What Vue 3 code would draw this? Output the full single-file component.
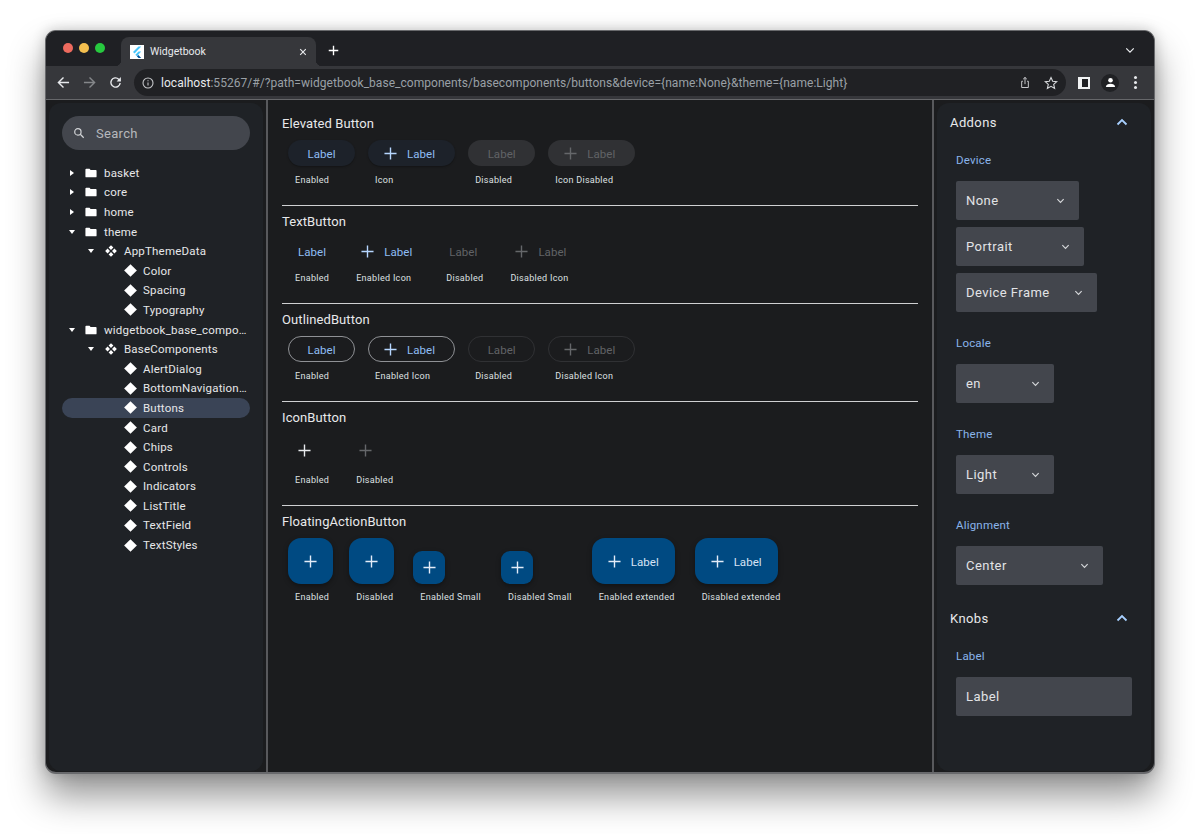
<template>
  <div class="page">
    <div class="window">
      <div class="titlebar">
        <div class="lights">
          <span class="light red"></span>
          <span class="light yellow"></span>
          <span class="light green"></span>
        </div>
        <div class="tab">
          <svg class="favicon" viewBox="0 0 14 14">
            <rect width="14" height="14" fill="#fff" />
            <path d="M8.5 1.5 3 7l1.6 1.6 6.6-7.1z" fill="#47c5fb" />
            <path d="M8.5 6.6 5.4 9.7l1.5 1.6 4.3-4.7z" fill="#47c5fb" />
            <path d="M6.9 11.3 8.5 13h2.700L8.400 9.900z" fill="#00569e" />
          </svg>
          <span class="tab-title">Widgetbook</span>
          <svg class="tab-close" viewBox="0 0 10 10"><path d="M1.500 1.500l7 7M8.500 1.500l-7 7" /></svg>
        </div>
        <svg class="new-tab" viewBox="0 0 12 12"><path d="M6 .8v10.400M.8 6h10.400" /></svg>
        <svg class="tabs-menu" viewBox="0 0 12 8"><path d="M1.500 1.500 6 6l4.500-4.500" /></svg>
      </div>

      <div class="toolbar">
        <svg class="nav-icon" viewBox="0 0 14 14"><path d="M13 7H2M7 1.500 1.500 7 7 12.500" /></svg>
        <svg class="nav-icon dim" viewBox="0 0 14 14"><path d="M1 7h11M7 1.500 12.500 7 7 12.500" /></svg>
        <svg class="nav-icon" viewBox="0 0 14 14"><path d="M12 7.500A5 5 0 1 1 10.500 3.400L12 5" /><path class="solid" d="M12.800 1.200v4.600H8.200z" /></svg>
        <div class="urlbar">
          <svg class="info" viewBox="0 0 12 12">
            <circle cx="6" cy="6" r="5" />
            <path d="M6 5.400v3.200M6 3.200v1.100" />
          </svg>
          <span class="url"><span class="host">localhost</span>:55267/#/?path=widgetbook_base_components/basecomponents/buttons&amp;device={name:None}&amp;theme={name:Light}</span>
          <svg class="url-icon" viewBox="0 0 12 14"><path d="M3.500 5.500H2v7.500h8V5.500H8.500M6 9V1M3.800 3 6 .9 8.200 3" /></svg>
          <svg class="url-icon star" viewBox="0 0 14 14"><path d="m7 1.500 1.700 3.800 4 .4-3 2.700.9 4L7 10.300l-3.600 2.100.9-4-3-2.700 4-.4z" /></svg>
        </div>
        <div class="side-icon"><span></span></div>
        <div class="avatar">
          <svg viewBox="0 0 12 12"><circle cx="6" cy="3.500" r="2.500" /><path d="M1 11c0-2.600 2.500-3.700 5-3.700s5 1.100 5 3.700z" /></svg>
        </div>
        <div class="kebab"><i></i><i></i><i></i></div>
      </div>

      <div class="content">
        <aside class="sidebar">
          <div class="panel tree-panel">
            <div class="search">
              <svg viewBox="0 0 14 14"><circle cx="5.700" cy="5.700" r="3.700" /><path d="m8.500 8.500 4 4" /></svg>
              <span>Search</span>
            </div>
            <div class="tree">
              <div
                v-for="row in tree"
                :key="row.label"
                :class="['tree-row', 'depth-' + row.depth, { selected: row.selected }]"
              >
                <span v-if="row.arrow" :class="['arrow', row.arrow]"></span>
                <svg v-if="row.type === 'folder'" class="tree-icon" viewBox="0 0 14 12">
                  <path d="M1.500 1h3.800l1.200 1.400h6a1 1 0 0 1 1 1v6.600a1 1 0 0 1-1 1h-11a1 1 0 0 1-1-1V2a1 1 0 0 1 1-1z" />
                </svg>
                <svg v-else-if="row.type === 'component'" class="tree-icon" viewBox="0 0 14 14">
                  <path d="m7 .2 2.800 2.800L7 5.800 4.200 3zM3 4.200 5.800 7 3 9.800.2 7zM11 4.200 13.800 7 11 9.800 8.200 7zM7 8.200 9.800 11 7 13.800 4.200 11z" />
                </svg>
                <span v-else class="diamond"></span>
                <span class="tree-label">{{ row.label }}</span>
              </div>
            </div>
          </div>
        </aside>

        <main class="main">
          <section v-for="section in sections" :key="section.title" class="section">
            <h2>{{ section.title }}</h2>
            <div class="items">
              <div v-for="item in section.items" :key="item.caption" class="item">
                <div :class="['btn', item.kind, { disabled: item.disabled, 'has-icon': item.icon, 'has-label': item.label }]">
                  <svg v-if="item.icon" class="plus" viewBox="0 0 14 14"><path d="M7 .5v13M.5 7h13" /></svg>
                  <span v-if="item.label">Label</span>
                </div>
                <div class="caption">{{ item.caption }}</div>
              </div>
            </div>
          </section>
        </main>

        <aside class="addons">
          <div class="panel addons-panel">
            <div class="group-head">
              <span>Addons</span>
              <svg viewBox="0 0 12 8"><path d="M1.500 6.500 6 2l4.500 4.500" /></svg>
            </div>
            <div v-for="group in addons" :key="group.label" class="field">
              <div class="field-label">{{ group.label }}</div>
              <div class="drops">
                <div v-for="d in group.options" :key="d.text" class="drop" :style="{ width: d.width + 'px' }">
                  <span>{{ d.text }}</span>
                  <svg viewBox="0 0 10 6"><path d="M1.500 1 5 4.500 8.500 1" /></svg>
                </div>
              </div>
            </div>
            <div class="group-head knobs">
              <span>Knobs</span>
              <svg viewBox="0 0 12 8"><path d="M1.500 6.500 6 2l4.500 4.500" /></svg>
            </div>
            <div class="field">
              <div class="field-label">Label</div>
              <div class="text-input">Label</div>
            </div>
          </div>
        </aside>
      </div>
    </div>
  </div>
</template>

<script setup>
const tree = [
  { label: 'basket', depth: 0, arrow: 'right', type: 'folder' },
  { label: 'core', depth: 0, arrow: 'right', type: 'folder' },
  { label: 'home', depth: 0, arrow: 'right', type: 'folder' },
  { label: 'theme', depth: 0, arrow: 'down', type: 'folder' },
  { label: 'AppThemeData', depth: 1, arrow: 'down', type: 'component' },
  { label: 'Color', depth: 2, type: 'use' },
  { label: 'Spacing', depth: 2, type: 'use' },
  { label: 'Typography', depth: 2, type: 'use' },
  { label: 'widgetbook_base_compo…', depth: 0, arrow: 'down', type: 'folder' },
  { label: 'BaseComponents', depth: 1, arrow: 'down', type: 'component' },
  { label: 'AlertDialog', depth: 2, type: 'use' },
  { label: 'BottomNavigation…', depth: 2, type: 'use' },
  { label: 'Buttons', depth: 2, type: 'use', selected: true },
  { label: 'Card', depth: 2, type: 'use' },
  { label: 'Chips', depth: 2, type: 'use' },
  { label: 'Controls', depth: 2, type: 'use' },
  { label: 'Indicators', depth: 2, type: 'use' },
  { label: 'ListTitle', depth: 2, type: 'use' },
  { label: 'TextField', depth: 2, type: 'use' },
  { label: 'TextStyles', depth: 2, type: 'use' }
]

const sections = [
  {
    title: 'Elevated Button',
    items: [
      { kind: 'elevated', label: true, caption: 'Enabled' },
      { kind: 'elevated', label: true, icon: true, caption: 'Icon' },
      { kind: 'elevated', label: true, disabled: true, caption: 'Disabled' },
      { kind: 'elevated', label: true, icon: true, disabled: true, caption: 'Icon Disabled' }
    ]
  },
  {
    title: 'TextButton',
    items: [
      { kind: 'text', label: true, caption: 'Enabled' },
      { kind: 'text', label: true, icon: true, caption: 'Enabled Icon' },
      { kind: 'text', label: true, disabled: true, caption: 'Disabled' },
      { kind: 'text', label: true, icon: true, disabled: true, caption: 'Disabled Icon' }
    ]
  },
  {
    title: 'OutlinedButton',
    items: [
      { kind: 'outlined', label: true, caption: 'Enabled' },
      { kind: 'outlined', label: true, icon: true, caption: 'Enabled Icon' },
      { kind: 'outlined', label: true, disabled: true, caption: 'Disabled' },
      { kind: 'outlined', label: true, icon: true, disabled: true, caption: 'Disabled Icon' }
    ]
  },
  {
    title: 'IconButton',
    items: [
      { kind: 'icon', icon: true, caption: 'Enabled' },
      { kind: 'icon', icon: true, disabled: true, caption: 'Disabled' }
    ]
  },
  {
    title: 'FloatingActionButton',
    items: [
      { kind: 'fab', icon: true, caption: 'Enabled' },
      { kind: 'fab', icon: true, caption: 'Disabled' },
      { kind: 'fab small', icon: true, caption: 'Enabled Small' },
      { kind: 'fab small', icon: true, caption: 'Disabled Small' },
      { kind: 'fab extended', icon: true, label: true, caption: 'Enabled extended' },
      { kind: 'fab extended', icon: true, label: true, caption: 'Disabled extended' }
    ]
  }
]

const addons = [
  {
    label: 'Device',
    options: [
      { text: 'None', width: 123 },
      { text: 'Portrait', width: 128 },
      { text: 'Device Frame', width: 141 }
    ]
  },
  { label: 'Locale', options: [{ text: 'en', width: 98 }] },
  { label: 'Theme', options: [{ text: 'Light', width: 98 }] },
  { label: 'Alignment', options: [{ text: 'Center', width: 147 }] }
]
</script>

<style>
body {
  background: #fff;
}
</style>

<style scoped>
.page {
  height: 834px;
  padding: 30px 45px 0;
  box-sizing: border-box;
  overflow: hidden;
  font-family: Roboto, "Liberation Sans", sans-serif;
}

.window {
  height: 744px;
  box-sizing: border-box;
  display: flex;
  flex-direction: column;
  border: 1px solid #68696c;
  border-bottom-width: 2px;
  border-radius: 11px;
  background: #1b1c1e;
  box-shadow: 0 22px 36px rgba(0, 0, 0, 0.42), 0 0 14px rgba(0, 0, 0, 0.2);
  overflow: hidden;
}

.titlebar {
  height: 35px;
  flex: none;
  display: flex;
  align-items: flex-end;
  background: #1f2024;
}

.lights {
  display: flex;
  gap: 6px;
  margin: 0 0 13px 17px;
  width: 58px;
}

.light {
  width: 10px;
  height: 10px;
  border-radius: 50%;
}

.red { background: #ed6a5e; }
.yellow { background: #f4bf4f; }
.green { background: #27c93f; }

.tab {
  position: relative;
  width: 195px;
  height: 29px;
  box-sizing: border-box;
  padding: 0 9px;
  display: flex;
  align-items: center;
  background: #36373b;
  border-radius: 8px 8px 0 0;
}

.tab::before,
.tab::after {
  content: "";
  position: absolute;
  bottom: 0;
  width: 6px;
  height: 6px;
}

.tab::before {
  left: -6px;
  background: radial-gradient(circle at 0 0, transparent 6px, #36373b 6.5px);
}

.tab::after {
  right: -6px;
  background: radial-gradient(circle at 100% 0, transparent 6px, #36373b 6.5px);
}

.favicon {
  width: 14px;
  height: 14px;
  flex: none;
}

.tab-title {
  margin-left: 6px;
  flex: 1;
  color: #e8eaed;
  font-size: 10.500px;
}

.tab-close {
  width: 8px;
  height: 8px;
  fill: none;
  stroke: #e8eaed;
  stroke-width: 1.4;
}

.new-tab {
  width: 11px;
  height: 11px;
  margin: 0 0 10px 12px;
  fill: none;
  stroke: #fff;
  stroke-width: 1.5;
}

.tabs-menu {
  width: 10px;
  height: 7px;
  margin: 0 19px 12px auto;
  fill: none;
  stroke: #e8eaed;
  stroke-width: 1.5;
}

.toolbar {
  height: 33px;
  flex: none;
  display: flex;
  align-items: center;
  background: #36373b;
  border-bottom: 1px solid #66676a;
}

.nav-icon {
  width: 13px;
  height: 13px;
  margin-left: 11px;
  margin-right: 2px;
  fill: none;
  stroke: #e8eaed;
  stroke-width: 1.5;
}

.nav-icon.dim {
  stroke: #85878a;
}

.nav-icon .solid {
  fill: #e8eaed;
  stroke: none;
}

.urlbar {
  width: 932px;
  height: 27px;
  margin-left: 10px;
  box-sizing: border-box;
  padding: 0 8px 0 8px;
  display: flex;
  align-items: center;
  background: #202124;
  border-radius: 14px;
}

.info {
  width: 12px;
  height: 12px;
  flex: none;
  fill: none;
  stroke: #c4c6c9;
  stroke-width: 1.1;
}

.url {
  flex: 1;
  margin-left: 7px;
  color: #9aa0a6;
  font-size: 12px;
  letter-spacing: 0.04px;
  white-space: nowrap;
}

.host {
  color: #e8eaed;
}

.url-icon {
  width: 10px;
  height: 13px;
  fill: none;
  stroke: #d5d7da;
  stroke-width: 1.1;
}

.url-icon.star {
  width: 14px;
  height: 14px;
  margin-left: 14px;
}

.side-icon {
  width: 12px;
  height: 12px;
  margin-left: 12px;
  box-sizing: border-box;
  background: #f1f3f4;
  padding: 2px 2px 2px 4px;
}

.side-icon span {
  display: block;
  height: 100%;
  background: #202124;
}

.avatar {
  width: 18px;
  height: 18px;
  margin-left: 11px;
  border-radius: 50%;
  background: #202124;
  display: flex;
  align-items: center;
  justify-content: center;
}

.avatar svg {
  width: 11px;
  height: 11px;
  fill: #fff;
}

.kebab {
  margin-left: 15px;
  display: flex;
  flex-direction: column;
  gap: 2px;
}

.kebab i {
  width: 3px;
  height: 3px;
  border-radius: 50%;
  background: #e8eaed;
}

.content {
  flex: 1;
  min-height: 0;
  display: flex;
}

.sidebar {
  width: 222px;
  flex: none;
  box-sizing: border-box;
  padding: 3px 3px 1px 3px;
  border-right: 2px solid #58595c;
}

.panel {
  height: 100%;
  box-sizing: border-box;
  background: #1f2226;
  border-radius: 12px;
}

.tree-panel {
  padding: 13px 13px 0 13px;
}

.search {
  height: 34px;
  display: flex;
  align-items: center;
  padding-left: 11px;
  background: #43464d;
  border-radius: 17px;
  color: #b6b8bc;
  font-size: 13px;
  letter-spacing: 0.3px;
}

.search svg {
  width: 12px;
  height: 12px;
  margin-right: 11px;
  fill: none;
  stroke: #d3d5d8;
  stroke-width: 1.4;
}

.tree {
  margin-top: 13px;
  display: grid;
  grid-template-columns: minmax(0, 1fr);
  grid-auto-rows: 19.600px;
}

.tree-row {
  display: flex;
  align-items: center;
  color: #e6e7e9;
  font-size: 11.500px;
  letter-spacing: 0.2px;
  border-radius: 10px;
  white-space: nowrap;
}

.tree-row.selected {
  background: #3a4456;
}

.depth-0 { padding-left: 7px; }
.depth-1 { padding-left: 26px; }
.depth-2 { padding-left: 62px; }

.arrow {
  width: 6px;
  height: 6px;
  margin-right: 10px;
  flex: none;
  display: flex;
  align-items: center;
  justify-content: center;
}

.depth-1 .arrow {
  margin-right: 11px;
}

.arrow::before {
  content: "";
  border-style: solid;
  border-color: transparent;
}

.arrow.right::before {
  border-width: 3.500px 0 3.500px 4px;
  border-left-color: #fff;
}

.arrow.down::before {
  border-width: 4px 3.500px 0;
  border-top-color: #fff;
}

.tree-icon {
  width: 12px;
  height: 12px;
  flex: none;
  margin-right: 7px;
  fill: #fff;
}

.diamond {
  width: 9px;
  height: 9px;
  flex: none;
  margin: 0 8px 0 2px;
  background: #fff;
  transform: rotate(45deg);
}

.main {
  flex: 1;
  min-width: 0;
  box-sizing: border-box;
  padding: 16px 14px 0 14px;
}

.section {
  padding-bottom: 19px;
  margin-bottom: 8px;
  border-bottom: 1px solid #cfd0d2;
}

.section:last-child {
  border-bottom: 0;
}

h2 {
  margin: 0 0 8px;
  height: 16px;
  line-height: 16px;
  color: #e8e9eb;
  font-size: 13px;
  font-weight: 400;
  letter-spacing: 0.1px;
}

.items {
  display: flex;
  gap: 13px;
  padding-left: 6px;
}

.item {
  display: flex;
  flex-direction: column;
  align-items: flex-start;
}

.caption {
  margin-top: 8px;
  padding: 0 7px;
  height: 12px;
  line-height: 12px;
  color: #dfe0e2;
  font-size: 9px;
  letter-spacing: 0.3px;
  white-space: nowrap;
}

.btn {
  height: 26px;
  box-sizing: border-box;
  display: flex;
  align-items: center;
  color: #8fbcf4;
  font-size: 11.500px;
  letter-spacing: 0.05px;
}

.btn span {
  margin-top: 1px;
}

.plus {
  width: 13px;
  height: 13px;
  flex: none;
  fill: none;
  stroke: #b6d6ff;
  stroke-width: 1.500;
}

.has-icon.has-label .plus {
  margin-right: 10px;
}

.elevated,
.outlined {
  padding: 0 19.500px;
  border-radius: 13px;
}

.elevated.has-icon {
  padding: 0 20px 0 16px;
}

.elevated {
  background: #1d222a;
  box-shadow: 0 1px 2px rgba(0, 0, 0, 0.3);
}

.elevated.disabled {
  background: #303134;
  box-shadow: none;
}

.outlined {
  padding: 0 18.500px;
  border: 1px solid #8f9195;
}

.outlined.has-icon {
  padding: 0 19px 0 15px;
}

.outlined.disabled {
  border-color: #303134;
}

.text {
  padding: 0 10px;
}

.text.has-icon {
  padding: 0 14px 0 12px;
}

.btn.disabled {
  color: #616366;
}

.disabled .plus {
  stroke: #65676a;
}

.icon {
  width: 33px;
  height: 33px;
  justify-content: center;
}

.icon .plus {
  stroke: #e8eaed;
}

.icon.disabled .plus {
  stroke: #65676a;
}

.icon + .caption {
  margin-top: 7px;
}

.fab {
  width: 45px;
  height: 46px;
  justify-content: center;
  border-radius: 13px;
  background: #004a82;
  color: #d7e3f5;
  box-shadow: 0 2px 5px rgba(0, 0, 0, 0.35);
}

.fab + .caption {
  margin-top: 7px;
}

.fab .plus {
  stroke: #e3ecf8;
}

.fab.small {
  width: 32px;
  height: 33px;
  margin-top: 13px;
  border-radius: 9px;
}

.fab.extended {
  width: 83px;
  border-radius: 13px;
}

.addons {
  width: 222px;
  flex: none;
  box-sizing: border-box;
  padding: 3px 3px 1px 3px;
  border-left: 2px solid #58595c;
}

.addons-panel {
  padding: 9px 0 0 13px;
}

.group-head {
  height: 20px;
  display: flex;
  align-items: center;
  justify-content: space-between;
  padding-right: 23px;
  color: #e8e9eb;
  font-size: 13px;
  letter-spacing: 0.4px;
}

.group-head svg {
  width: 12px;
  height: 8px;
  fill: none;
  stroke: #a8d0ff;
  stroke-width: 1.800;
}

.knobs {
  margin-top: 23px;
}

.field {
  padding-left: 6px;
  margin-top: 21px;
}

.field-label {
  height: 14px;
  line-height: 14px;
  color: #8ab4ea;
  font-size: 11.500px;
  letter-spacing: 0.2px;
}

.field + .field {
  margin-top: 24px;
}

.drops {
  margin-top: 14px;
  display: flex;
  flex-direction: column;
  gap: 7px;
}

.drop,
.text-input {
  height: 39px;
  box-sizing: border-box;
  display: flex;
  align-items: center;
  padding: 0 14px 0 10px;
  background: #43464d;
  border-radius: 2px;
  color: #e2e3e6;
  font-size: 13px;
  letter-spacing: 0.45px;
}

.drop {
  justify-content: space-between;
}

.drop svg {
  width: 9px;
  height: 6px;
  fill: none;
  stroke: #d5d7da;
  stroke-width: 1.300;
}

.text-input {
  width: 176px;
  margin-top: 14px;
}
</style>
